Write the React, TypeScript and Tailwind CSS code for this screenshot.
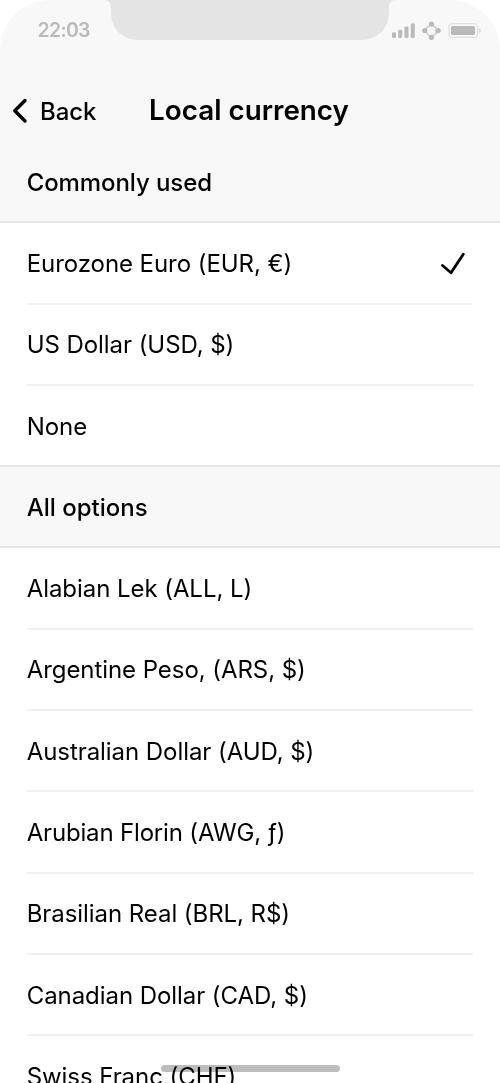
import React from 'react';
import { clsx } from 'clsx';

const common = ['Eurozone Euro (EUR, €)', 'US Dollar (USD, $)', 'None'];

const allOptions = [
  'Alabian Lek (ALL, L)',
  'Argentine Peso, (ARS, $)',
  'Australian Dollar (AUD, $)',
  'Arubian Florin (AWG, ƒ)',
  'Brasilian Real (BRL, R$)',
  'Canadian Dollar (CAD, $)',
  'Swiss Franc (CHF)',
];

const StatusBar: React.FC = () => {
  return (
    <div className="relative flex h-[60px] items-center justify-between pl-[37.5px] pr-[19px] text-[#bababa]">
      <svg className="absolute left-[104px] top-0" width="292" height="40" viewBox="0 0 292 40" fill="#e4e4e4">
        <path d="M0 0C5 0 7 3 7 8V12C7 29 19 40 35 40H257C273 40 285 29 285 12V8C285 3 287 0 292 0Z" />
      </svg>
      <span className="pt-[2px] text-[19.5px] font-semibold leading-none tracking-[-0.7px]">22:03</span>
      <svg width="90" height="22" viewBox="391 19 90 22" fill="currentColor">
        <rect x="392" y="32.3" width="4" height="5.7" rx="1.3" />
        <rect x="398.2" y="29.8" width="4" height="8.2" rx="1.3" />
        <rect x="404.5" y="26.6" width="4" height="11.4" rx="1.3" />
        <rect x="410.8" y="23.3" width="4" height="14.7" rx="1.3" />
        <circle cx="431.4" cy="30.6" r="5.2" fill="none" stroke="currentColor" strokeWidth="1.1" />
        <circle cx="431.4" cy="24" r="2.6" />
        <circle cx="431.4" cy="37.3" r="2.6" />
        <circle cx="424.8" cy="30.6" r="2.6" />
        <circle cx="438.2" cy="30.6" r="2.6" />
        <rect x="449" y="23.6" width="28.6" height="13.8" rx="3.6" fill="none" stroke="#e0e0e0" strokeWidth="1.3" />
        <rect x="451" y="26" width="24" height="9" rx="1.7" />
        <path d="M479 28.3C481.4 29.2 481.4 31.8 479 32.7Z" fill="#dedede" />
      </svg>
    </div>
  );
};

const Header: React.FC = () => {
  return (
    <header className="relative flex h-[102px] items-center justify-center">
      <button className="absolute left-3 flex items-center text-[24px] font-medium tracking-[-0.1px]">
        <svg width="16" height="26" viewBox="0 0 16 26" fill="none" stroke="currentColor" strokeWidth="3.4" strokeLinecap="round" strokeLinejoin="round">
          <path d="M13 2.5L2.8 12.8L13 23" />
        </svg>
        <span className="ml-3 pt-[2px]">Back</span>
      </button>
      <h1 className="pb-[2px] pr-[2px] text-[27.8px] font-semibold">Local currency</h1>
    </header>
  );
};

const Row: React.FC<{ label: string; selected?: boolean; last?: boolean }> = ({ label, selected, last }) => {
  return (
    <li
      className={clsx(
        'mx-[26.67px] flex h-[81.333px] items-center justify-between',
        !last && 'border-b-2 border-[#f0f0f0]'
      )}
    >
      <span className={clsx(last ? 'pt-0' : 'pt-[2px]', label.includes('ƒ') ? 'tracking-[-0.17px]' : 'tracking-[-0.06px]')}>
        {label}
      </span>
      {selected && (
        <svg className="mr-[7.5px] mt-px" width="26" height="24" viewBox="0 0 26 24" fill="none" stroke="currentColor" strokeWidth="2.8" strokeLinecap="round" strokeLinejoin="round">
          <path d="M2.5 13.5L11 20.8L23.3 2.2" />
        </svg>
      )}
    </li>
  );
};

const App: React.FC = () => {
  return (
    <div className="relative h-[1083px] overflow-hidden rounded-t-[50px] bg-white font-['Inter',sans-serif] text-[24px] leading-8 text-black">
      <div className="h-[222.67px] border-b-2 border-[#e6e6e6] bg-[#f8f8f8]">
        <StatusBar />
        <Header />
        <h2 className="-mt-px pl-[26.67px] font-medium leading-[44px] tracking-[-0.08px]">Commonly used</h2>
      </div>
      <ul className="pt-[0.7px]">
        {common.map((label, i) => (
          <Row key={label} label={label} selected={i === 0} last={i === common.length - 1} />
        ))}
      </ul>
      <h2 className="-mt-[2.7px] flex h-[83px] items-center border-y-2 border-[#e6e6e6] bg-[#f8f8f8] pl-[26.67px] pt-[3px] font-medium">
        All options
      </h2>
      <ul className="pt-[0.8px]">
        {allOptions.map((label) => (
          <Row key={label} label={label} />
        ))}
      </ul>
      {/* home indicator, list text stays dark underneath */}
      <div className="absolute left-[161px] top-[1065px] h-[7px] w-[179px] rounded-full bg-[#bdbdbd] mix-blend-multiply" />
    </div>
  );
};

export default App;
